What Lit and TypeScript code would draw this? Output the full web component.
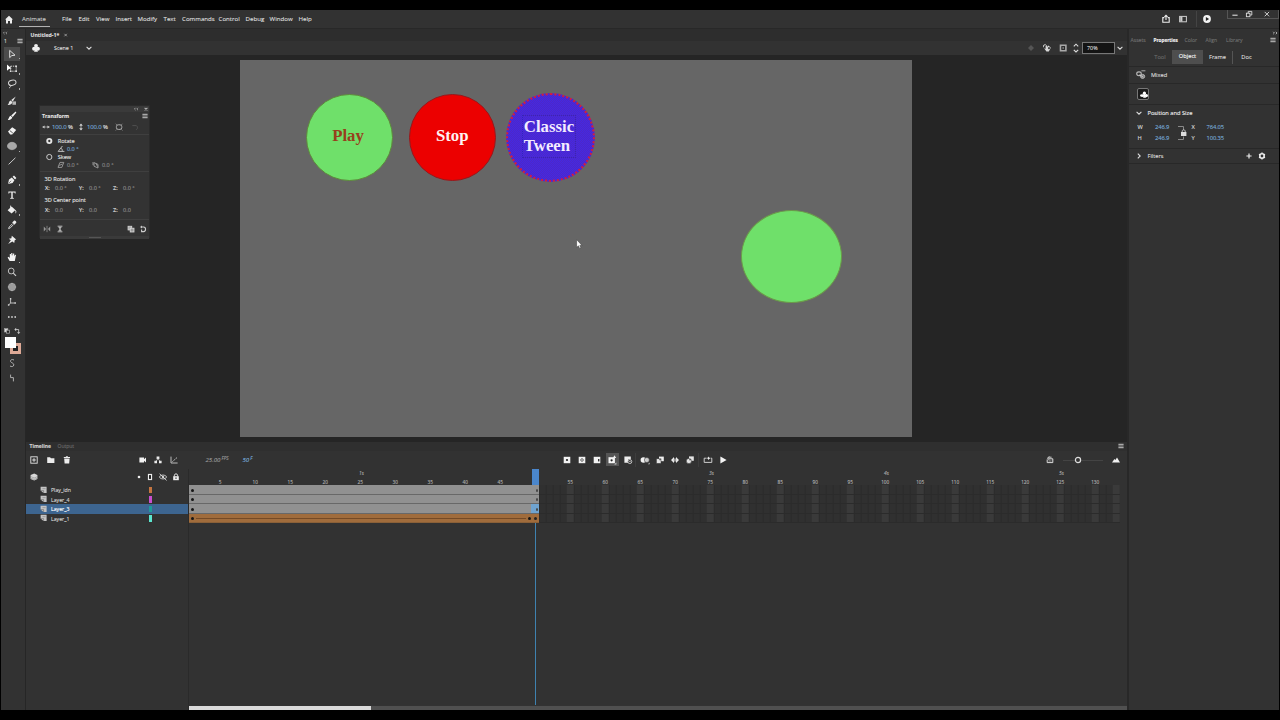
import { LitElement, html, css, svg } from "lit";
import { customElement } from "lit/decorators.js";

const W = "#e4e4e4";

/* Each glyph is drawn on a 12 x 12 grid centred on (6,6). */
const glyphs: Record<string, any> = {
  home: svg`<path d="M6 1.8 L10 5.6 H9 V9.6 H7 V7 H5 V9.6 H3 V5.6 H2 Z" fill="#eee"/>`,
  share: svg`<path d="M4.3 4.6 H2.8 V9.2 H9.2 V4.6 H7.7 M6 7 V2.4 M4.4 3.8 L6 2.2 L7.6 3.8" fill="none" stroke="#eee" stroke-width="1.1"/>`,
  workspace: svg`<rect x="2.6" y="3.4" width="6.8" height="5.4" fill="none" stroke="#ccc"/><rect x="3.2" y="3.6" width="2.2" height="5" fill="#ccc"/>`,
  playCircle: svg`<circle cx="6" cy="6" r="3.9" fill="#f2f2f2"/><path d="M4.9 4 L8.1 6 L4.9 8Z" fill="#222"/>`,
  min: svg`<path d="M3.4 7.2 H8.6" stroke="#eee" stroke-width="1"/>`,
  restore: svg`<path d="M5.2 5.2 V3.4 H8.8 V7 H7" fill="none" stroke="#ddd" stroke-width=".9"/><rect x="3.4" y="5.2" width="3.5" height="3.5" fill="none" stroke="#ddd" stroke-width=".9"/>`,
  close: svg`<path d="M3.7 3.9 L8.1 8.3 M8.1 3.9 L3.7 8.3" stroke="#ddd" stroke-width=".9"/>`,
  tinyX: svg`<path d="M4.4 4.8 L6.9 7.3 M6.9 4.8 L4.4 7.3" stroke="#aaa" stroke-width=".8"/>`,
  panelX: svg`<path d="M4.6 4.8 L7.4 7.4 M7.4 4.8 L4.6 7.4" stroke="#bbb" stroke-width="1.1"/>`,
  left2: svg`<path d="M5.6 4.8 L4.4 6 L5.6 7.2 M8 4.8 L6.8 6 L8 7.2" stroke="#aaa" stroke-width=".8" fill="none"/>`,
  right2: svg`<path d="M4.2 4.8 L5.4 6 L4.2 7.2 M6.8 4.8 L8 6 L6.8 7.2" stroke="#ccc" stroke-width=".8" fill="none"/>`,
  burger: svg`<path d="M3.4 4.4 H8.6 M3.4 6 H8.6 M3.4 7.6 H8.6" stroke="#a8a8a8" stroke-width="1.1"/>`,
  club: svg`<circle cx="6" cy="3.8" r="1.9" fill="#f0f0f0"/><circle cx="4.1" cy="6.8" r="2" fill="#f0f0f0"/><circle cx="7.9" cy="6.8" r="2" fill="#f0f0f0"/><path d="M5.2 5 H6.8 V7.6 L8 9.8 H4 L5.2 7.6Z" fill="#f0f0f0"/>`,
  chevD: svg`<path d="M3.6 4.8 L6 7.2 L8.4 4.8" stroke="#ddd" stroke-width="1.1" fill="none"/>`,
  chevR: svg`<path d="M4.8 3.6 L7.2 6 L4.8 8.4" stroke="#ddd" stroke-width="1.1" fill="none"/>`,
  center: svg`<path d="M6 3 L9 6 L6 9 L3 6Z" fill="#555"/>`,
  rotateHand: svg`<path d="M3 6 L4.6 7 V3.4 L5.6 3 L6.2 5 L7 3.6 L8 4 L9.8 5.8 L7.8 9.4 H5.4Z" fill="#d8d8d8"/><path d="M2.2 3.6 L4.6 2.4 M2 5 L3 4.4" stroke="#ddd"/><circle cx="8" cy="6.2" r="1.1" fill="#444"/>`,
  clip: svg`<rect x="3.5" y="3.3" width="5.4" height="5.4" fill="#222" stroke="#a9a9a9" stroke-width="1.6"/><rect x="5.3" y="5.1" width="1.8" height="1.8" fill="#777"/>`,
  updown: svg`<path d="M3.8 4.4 L6 2.2 L8.2 4.4 M3.8 7.8 L6 10 L8.2 7.8" fill="none" stroke="#ddd" stroke-width="1.1"/>`,

  select: svg`<path d="M3.7 2.4 V9.6 L5.8 7.6 L9 7.2Z" fill="none" stroke="${W}" stroke-width=".95"/>`,
  freeT: svg`<path d="M1 1.6 L5.6 5.6 L3 6 L1 7.8Z" fill="#fff"/><rect x="4.6" y="3.2" width="5.6" height="5" fill="none" stroke="#ddd" stroke-width=".9" stroke-dasharray="1.4 .8"/><path d="M3.8 7.4h1.6v1.6h-1.6zM9.4 7.4H11v1.6H9.4zM9.4 2.4H11V4H9.4z" fill="#ddd"/>`,
  lasso: svg`<ellipse cx="6.3" cy="4.8" rx="3.8" ry="2.5" fill="none" stroke="#d4d4d4" transform="rotate(-12 6 5)"/><path d="M3.2 6.2 C2.4 7.6 5 7 4.6 8.6 C4.4 9.4 3.4 9.6 3 10" fill="none" stroke="#d4d4d4" stroke-width=".9"/>`,
  fluid: svg`<path d="M9.8 1.4 L5.2 5 L6.8 6.6Z M4.6 5.4 L6.4 7 C5.6 9.8 3.4 10 1.6 10 C3.2 8.6 2.6 6.2 4.6 5.4Z" fill="#e4e4e4"/><rect x="6.4" y="6.4" width="3.6" height="3.4" fill="#b4b4b4"/>`,
  brush: svg`<path d="M9.6 1.6 L5.2 5.4 L6.7 6.9 L10.4 2.4Z M4.6 5.8 L6.3 7.5 C5.6 9.8 3.6 10 1.8 10 C3 8.6 2.8 6.6 4.6 5.8Z" fill="#f4f4f4"/>`,
  eraser: svg`<path d="M2 6.6 L6.2 2.2 L10.2 5 L6.2 9.6 H4.2Z" fill="#f2f2f2"/><path d="M3.8 5.6 L6.8 8" stroke="#333" stroke-width=".8"/>`,
  oval: svg`<ellipse cx="6" cy="6" rx="4.6" ry="3.7" fill="#a9a9a9" stroke="#c4c4c4" stroke-width=".5"/>`,
  line: svg`<path d="M2.6 9.4 L9.4 2.8" stroke="#d8d8d8" stroke-width=".9"/>`,
  pen: svg`<path d="M2 10 L3 5.4 L5.8 3.6 L8.4 6.2 L6.6 9Z M6.6 2.8 L8 1.6 L10.4 4 L9 5.4Z" fill="#eee"/><path d="M2.4 9.6 L5.2 6.8" stroke="#333" stroke-width=".6"/>`,
  type: svg`<path d="M2.4 2.4 H9.6 V4.6 H8.9 L8.5 3.4 H6.7 V8.8 L7.8 9.1 V9.7 H4.2 V9.1 L5.3 8.8 V3.4 H3.5 L3.1 4.6 H2.4Z" fill="#eee"/>`,
  bucket: svg`<path d="M1.6 6.2 L5.6 2.6 L9.4 6 L5.6 9.6Z" fill="#eee"/><path d="M4.6 1.6 V5 M9 6 C10.4 7 10 9 9.4 9" stroke="#eee" stroke-width=".9" fill="none"/>`,
  dropper: svg`<path d="M6.2 3.6 L8.2 1.6 C9 1.2 10.8 3 10.2 3.8 L8.4 5.8Z" fill="#eee"/><path d="M6.6 4.6 L3.2 8 L2.6 9.6 L4.2 8.9 L7.6 5.6" fill="none" stroke="#ddd" stroke-width=".9"/>`,
  pin: svg`<path d="M5.8 1.8 L10.2 5.4 L8.8 6 L8.2 9 L6.4 7.4 L2.2 10 L4.8 6.2 L2.8 4.8 L5.4 4.2Z" fill="#eee"/>`,
  hand: svg`<path d="M3.6 10 L1.6 6.4 L2.6 5.8 L3.8 6.9 V3 H4.9 L5.2 5 V2 H6.4 L6.5 5 L7.2 2.4 H8.2 V5.3 L9 3.7 L10 4.1 L8.8 10Z" fill="#f2f2f2"/>`,
  zoom: svg`<circle cx="5.2" cy="5" r="2.9" fill="none" stroke="#ccc" stroke-width=".9"/><path d="M7.3 7.1 L10 9.8" stroke="#ccc" stroke-width="1.2"/>`,
  ball: svg`<circle cx="6" cy="6" r="3.9" fill="#9c9c9c"/><path d="M6 1.8V3M6 9V10.2M1.8 6H3M9 6H10.2" stroke="#c4c4c4" stroke-width=".8"/>`,
  bones: svg`<path d="M4.6 3 V7 H9 M4.6 7 L2.6 9" fill="none" stroke="#ccc" stroke-width=".9"/><path d="M3.9 2h1.4v1.6H3.9zM8.5 6.2H10v1.6H8.5zM1.9 8.2h1.5v1.5H1.9z" fill="#ccc"/>`,
  dots: svg`<circle cx="2.8" cy="6" r=".9" fill="#ccc"/><circle cx="6" cy="6" r=".9" fill="#ccc"/><circle cx="9.2" cy="6" r=".9" fill="#ccc"/>`,
  bwSwatch: svg`<rect x="3" y="3.2" width="4" height="4" fill="#ddd" stroke="#aaa" stroke-width=".7"/><rect x="5.2" y="5" width="3.6" height="3.6" fill="#222" stroke="#bbb" stroke-width=".8"/>`,
  swap: svg`<path d="M4.2 4.2 H8 V8.2" fill="none" stroke="#ccc"/><path d="M5 2.2 V6.2 L2.8 4.2Z M6 7.4 H10 L8 9.6Z" fill="#ccc"/>`,
  sCurve: svg`<path d="M8 3 C6 1.8 4 3 4.6 4.6 C5.2 6 7.8 6 7.8 7.8 C7.8 9.8 5.4 10 4 9" fill="none" stroke="#bbb" stroke-width=".9"/>`,
  elbow: svg`<path d="M4.6 2.6 V5.6 H7.4 V9.4" fill="none" stroke="#bbb" stroke-width=".9"/>`,

  hArrow: svg`<path d="M2.6 6 H9.4" stroke="#999" stroke-width=".8"/><path d="M4.6 4.4V7.6L2.2 6ZM7.4 4.4V7.6L9.8 6Z" fill="#ccc"/>`,
  vArrow: svg`<path d="M6 3 V9" stroke="#aaa"/><path d="M4.2 4.8H7.8L6 2.4ZM4.2 7.2H7.8L6 9.6Z" fill="#ccc"/>`,
  link: svg`<rect x="3.4" y="3.8" width="5.4" height="4.6" rx="1.8" fill="none" stroke="#aaa"/><path d="M2.8 2.8l.9.9M9.4 2.8l-.9.9M2.8 9.4l.9-.9M9.4 9.4l-.9-.9" stroke="#aaa" stroke-width=".8"/>`,
  undoDim: svg`<path d="M3.4 4.6 H7 C9 5 9 8.2 7 8.6" fill="none" stroke="#505050"/>`,
  radioOn: svg`<circle cx="6.3" cy="6" r="2.1" fill="#333" stroke="#e4e4e4" stroke-width="1.9"/>`,
  radioOff: svg`<circle cx="6.3" cy="6" r="2.6" fill="none" stroke="#c8c8c8" stroke-width="1"/>`,
  angle: svg`<path d="M7.4 3 L3.2 8.4 H9.4 M6 5.2 C7.2 6 7.4 7 7.2 8.2" fill="none" stroke="#ccc" stroke-width=".9"/>`,
  skewA: svg`<path d="M5 3.4 H8.8 L6.8 8.4 H3Z M4.4 6.4 L7.4 5" fill="none" stroke="#aaa" stroke-width=".8"/>`,
  skewB: svg`<path d="M4 3.6 L8 5.4 V9 L4 7.2Z M3 3V6.2M6 4.4 L7.6 7.6" fill="none" stroke="#aaa" stroke-width=".8"/>`,
  flipH: svg`<path d="M6 2.8V9.2" stroke="#999" stroke-width=".7"/><path d="M2.8 3.6V8.4L5 6ZM9.2 3.6V8.4L7 6Z" fill="#999"/>`,
  flipV: svg`<path d="M3.6 3.2H8.4M3.6 8.8H8.4" stroke="#bbb"/><path d="M4.6 4.2H7.4L6 6L7.4 7.8H4.6L6 6Z" fill="#ccc" stroke="#ccc" stroke-width=".4"/>`,
  dup: svg`<rect x="3" y="3.2" width="3.8" height="3.8" fill="#aaa" stroke="#ddd" stroke-width=".7"/><rect x="5.2" y="5.2" width="3.8" height="3.8" fill="#999" stroke="#ddd" stroke-width=".8"/>`,
  undo: svg`<path d="M4 4 H6.6 C9.2 4 9.2 8.4 6.6 8.6 H4.6 V6.4" fill="none" stroke="#ccc" stroke-width="1.1"/><path d="M5 2.4V5.6L3 4Z" fill="#ccc"/>`,

  addLayer: svg`<rect x="2.8" y="2.8" width="6.4" height="6.4" fill="none" stroke="#e4e4e4" stroke-width=".9"/><path d="M6 4.2V7.8M4.2 6H7.8" stroke="#eee" stroke-width=".9"/>`,
  folder: svg`<path d="M2.2 3.2H5L6 4.2H9.4V9H2.2Z" fill="#ececec"/>`,
  trash: svg`<path d="M3.2 4.4H8.6L8.2 9.4H3.6ZM2.8 3.1H9V4H2.8ZM4.9 2.3H6.9V3.3H4.9Z" fill="#ececec"/>`,
  camera: svg`<path d="M2.4 3.6H7V5.2L9 3.6V8.4L7 6.8V8.4H2.4Z" fill="#f2f2f2"/>`,
  parent: svg`<path d="M4.6 2.6H7.4V5H4.6ZM2.4 6.8H5V9.2H2.4ZM7 6.8H9.6V9.2H7Z" fill="#eee"/><path d="M6 4.6L3.8 7.6M6 4.6L8.2 7.6" stroke="#ccc" stroke-width=".8"/>`,
  graph: svg`<path d="M3 2.6V9H9.6" fill="none" stroke="#ccc" stroke-width=".9"/><path d="M4.4 7.6L9 3.6" fill="none" stroke="#ccc" stroke-width=".9" stroke-dasharray="1.6 .7"/>`,
  stack: svg`<path d="M2.6 4 L6.2 2.4 L9.4 4 V8 L6.2 9.6 L2.6 8Z" fill="#d8d8d8"/><path d="M2.8 5.6L6.2 7L9.4 5.6M2.8 7.2L6.2 8.5L9.4 7.2" fill="none" stroke="#777" stroke-width=".5"/>`,
  dot: svg`<circle cx="6" cy="6" r="1.3" fill="#eee"/>`,
  outline: svg`<rect x="4.5" y="3.5" width="3" height="5" fill="#111" stroke="#eee" stroke-width="1.2"/>`,
  eyeOff: svg`<path d="M2.2 6C4 3.4 8 3.4 9.8 6C8 8.6 4 8.6 2.2 6Z" fill="none" stroke="#ccc" stroke-width=".9"/><circle cx="6" cy="6" r="1.2" fill="#ccc"/><path d="M2.6 2.8L9.6 9.4" stroke="#ddd" stroke-width=".9"/>`,
  lock: svg`<rect x="3.2" y="5.2" width="5.6" height="4" fill="#eee"/><path d="M4.4 5.4V4.2C4.4 2.4 7.6 2.4 7.6 4.2V5.4" fill="none" stroke="#eee" stroke-width=".9"/><rect x="5.5" y="6.4" width="1" height="1.6" fill="#333"/>`,
  page: svg`<path d="M2.6 2.8H8.6V9H5.6L2.6 6.6Z" fill="#c4c4c4"/><path d="M2.6 6.6H5.6V9" fill="none" stroke="#666" stroke-width=".6"/><path d="M4.4 4.6H7.6" stroke="#777" stroke-width=".5"/>`,
  kf: svg`<rect x="2.7" y="2.8" width="6.6" height="6.4" fill="#f2f2f2"/><circle cx="6" cy="6" r="1.1" fill="#222"/>`,
  kfBlank: svg`<rect x="2.7" y="2.8" width="6.6" height="6.4" fill="#f2f2f2"/><circle cx="6" cy="6" r="1.3" fill="#eee" stroke="#333" stroke-width=".7"/>`,
  frame: svg`<rect x="2.7" y="2.8" width="6.6" height="6.4" fill="#f2f2f2"/><rect x="7" y="5" width="1.4" height="2.4" fill="#333"/>`,
  kfAuto: svg`<rect x="2.5" y="3.2" width="6.4" height="6" fill="#f5f5f5"/><circle cx="5.6" cy="6.3" r="1.1" fill="#222"/><path d="M8.4 1.2L10.2 4H7Z" fill="#eee"/><path d="M10.4 8.4V10.6H8.2Z" fill="#ccc"/>`,
  kfRemove: svg`<path d="M2.4 2.6H8.8V5.4H6V8.8H2.4Z" fill="#eee"/><circle cx="7.8" cy="7.6" r="2" fill="#333" stroke="#ddd" stroke-width=".8"/><path d="M6.8 7.6H8.8" stroke="#ddd" stroke-width=".7"/>`,
  onion: svg`<circle cx="4.4" cy="6" r="2.8" fill="#f2f2f2"/><circle cx="7.8" cy="6" r="2.5" fill="#ccc" stroke="#333" stroke-width=".5"/><path d="M10.6 8.6V10.2H9Z" fill="#ccc"/>`,
  multi: svg`<rect x="5" y="2.6" width="4.8" height="4.6" fill="#eee"/><rect x="2.4" y="4.8" width="4.6" height="4.6" fill="#e4e4e4" stroke="#333" stroke-width=".5"/><rect x="5.4" y="5" width="1.3" height="1.2" fill="#333"/>`,
  tweenI: svg`<path d="M5 3V9L2 6ZM7 3V9L10 6Z" fill="#eee"/><path d="M4 6H8" stroke="#eee" stroke-width="2.6"/><path d="M4.8 6H7.2" stroke="#333" stroke-width=".9"/>`,
  tweenC: svg`<rect x="5" y="2.4" width="4.8" height="4.4" fill="#e4e4e4"/><circle cx="4.9" cy="7" r="2.6" fill="#e4e4e4" stroke="#333" stroke-width=".5"/><rect x="5.4" y="5" width="1.3" height="1.3" fill="#333"/>`,
  loop: svg`<path d="M4 4.2H2.2V8.4H9.8V4.2H8.6" fill="none" stroke="#ddd" stroke-width=".9"/><path d="M4.4 4.2H6" stroke="#ddd" stroke-width=".9"/><path d="M6 2.4V6L8.2 4.2Z" fill="#eee"/>`,
  play: svg`<path d="M3.4 2.6L9.6 6L3.4 9.4Z" fill="#f4f4f4"/>`,
  resetView: svg`<path d="M3.2 5.4V8.6H8.8V4.8H4.4" fill="none" stroke="#ddd" stroke-width="1"/><path d="M4.6 3.2H7.6M5.4 2.6L3.4 4.2L5.4 5.8" stroke="#ddd" stroke-width=".9" fill="none"/><path d="M4.4 7H7.6" stroke="#aaa" stroke-width=".8"/>`,
  knob: svg`<circle cx="6" cy="6" r="2.6" fill="#333" stroke="#ddd" stroke-width="1.2"/>`,
  hills: svg`<path d="M2 8.6L4.4 5L5.4 6L7 3.6L10 8.6Z" fill="#f0f0f0"/>`,
  mixed: svg`<ellipse cx="4" cy="4.8" rx="2.3" ry="1.9" fill="none" stroke="#bbb" stroke-width="1.1"/><ellipse cx="7.6" cy="7.4" rx="2.1" ry="2" fill="#888" stroke="#bbb" stroke-width=".9"/><path d="M4 5.8L8 7.8M6.4 1.8H10.4" stroke="#ccc" stroke-width=".8"/>`,
  clubSmall: svg`<circle cx="6.4" cy="4.2" r="1.6" fill="#fff"/><ellipse cx="4.2" cy="6.6" rx="2.2" ry="1.4" fill="#fff"/><circle cx="8.4" cy="6.6" r="1.6" fill="#fff"/><path d="M5.6 5H7.2L8 8.8H5.2Z" fill="#fff"/>`,
  plus: svg`<path d="M6 3.4V8.6M3.4 6H8.6" stroke="#eee" stroke-width="1.2"/>`,
  gear: svg`<circle cx="6" cy="6" r="2.2" fill="none" stroke="#eee" stroke-width="1.6"/><path d="M6 2.4V3.6M6 8.4V9.6M3 4.2L4 4.8M9 4.2L8 4.8M3 7.8L4 7.2M9 7.8L8 7.2" stroke="#eee" stroke-width="1.3"/>`,
};

const icon = (name: string) =>
  html`<svg class="ic" viewBox="0 0 12 12" width="12" height="12">${glyphs[name]}</svg>`;

const base = css`
  :host, * { box-sizing: border-box; }
  .ic { display: block; flex: none; justify-self: center; }
  .row { display: grid; grid-auto-rows: 100%; align-items: center; justify-items: start; white-space: nowrap; }
  .dim { color: #6a6a6a; }
  .blue { color: #78a9d8; }
  .b { font-weight: 700; }
`;

@customElement("menu-bar")
class MenuBar extends LitElement {
  static styles = [base, css`
    :host { display: flex; height: 19px; background: #323232; border-bottom: 1px solid #282828; font-size: 6.1px; }
    .home { width: 17.5px; padding: 3.5px 0 0 0; margin-left: -.5px; }
    .mode { width: 31px; height: 17.4px; line-height: 18px; text-align: center; border-bottom: 1.2px solid #b0b0b0; color: #ccc; margin-left: .5px; }
    .menus { margin-left: 12.6px; height: 17.8px; grid-template-columns: 16.5px 17.5px 19.5px 22px 26px 18.5px 36.5px 27px 24px 29px 14px; }
    .right { margin-left: auto; height: 18px; grid-template-columns: 17px 18px 9px 11px 15px; }
    .sep { width: 1px; height: 16px; background: #444; justify-self: center; }
    .win { display: grid; grid-template-columns: 14px 14px 21.5px; grid-auto-rows: 100%; width: 51.5px; height: 8.5px; border: 1px solid #555; border-top: 0; justify-items: center; align-items: center; }
    .win .ic { margin-top: 1px; }
  `];
  render() {
    const items = ["File", "Edit", "View", "Insert", "Modify", "Text", "Commands", "Control", "Debug", "Window", "Help"];
    return html`
      <div class="home">${icon("home")}</div>
      <div class="mode">Animate</div>
      <div class="row menus">${items.map((t) => html`<span>${t}</span>`)}</div>
      <div class="row right">${icon("share")}${icon("workspace")}<i class="sep"></i>${icon("playCircle")}</div>
      <div class="win">${icon("min")}${icon("restore")}${icon("close")}</div>`;
  }
}

@customElement("tool-strip")
class ToolStrip extends LitElement {
  static styles = [base, css`
    :host { display: flex; flex-direction: column; width: 25px; background: #323232; border-right: 1px solid #262626; font-size: 5px; align-items: center; padding-right: .4px; }
    .top { height: 7px; width: 100%; display: flex; align-items: center; margin: 0 0 1px -4px; }
    .head { width: 100%; height: 9.5px; display: flex; align-items: center; justify-content: space-between; padding: 0 0 2px 3px; }
    .head .ic { margin-right: -1px; }
    .tool { width: 16px; height: 15px; margin-right: 1px; display: flex; align-items: center; justify-content: center; }
    .tool.on { background: #4c4c4c; height: 13.4px; margin: .8px 1px .8px 0; }
    .more { width: 1.6px; height: 1.6px; background: #aaa; align-self: flex-end; margin: 0 -2px 1.5px .4px; }
    .gap { margin-top: 2.5px; }
    .gap2 { margin-top: 3.5px; }
    .pair { display: flex; height: 12px; margin-left: -1px; }
    .pair .ic { width: 10px; }
    .sw { display: grid; width: 16px; height: 17px; margin: .5px 0 1.5px 0; }
    .fill { grid-area: 1/1; width: 11px; height: 11px; background: #fff; z-index: 1; }
    .stroke { grid-area: 1/1; width: 11px; height: 11px; border: 3px solid #dda996; background: #222; align-self: end; justify-self: end; }
  `];
  tool(n: string, more = false, on = false) {
    return html`<div class="tool ${on ? "on" : ""}">${icon(n)}${more ? html`<i class="more"></i>` : ""}</div>`;
  }
  render() {
    return html`
      <div class="top">${icon("left2")}</div>
      <div class="head"><span>1</span>${icon("burger")}</div>
      <div>${this.tool("select", true, true)}${this.tool("freeT", true)}${this.tool("lasso", true)}</div>
      <div class="gap">${["fluid", "brush", "eraser"].map((n) => this.tool(n))}${this.tool("oval", true)}${this.tool("line")}</div>
      <div class="gap2">${this.tool("pen", true)}${this.tool("type")}${this.tool("bucket", true)}${this.tool("dropper")}${this.tool("pin")}</div>
      <div class="gap">${this.tool("hand", true)}${["zoom", "ball", "bones", "dots"].map((n) => this.tool(n))}</div>
      <div class="pair">${icon("bwSwatch")}${icon("swap")}</div>
      <div class="sw"><div class="fill"></div><div class="stroke"></div></div>
      ${this.tool("sCurve")}${this.tool("elbow")}`;
  }
}

@customElement("transform-panel")
class TransformPanel extends LitElement {
  static styles = [base, css`
    :host { display: block; width: 111px; height: 133px; background: #333; border: 1px solid #2b2b2b; font-size: 5.6px; color: #e2e2e2; }
    .strip { height: 5.5px; background: #3a3a3a; display: flex; justify-content: flex-end; align-items: center; }
    .strip .ic { margin: 1px -2.5px 0 0; }
    .title { height: 8px; display: flex; align-items: center; justify-content: space-between; padding-left: 2px; font-size: 5.2px; }
    .title .ic { margin-right: -1.5px; }
    .scale { height: 14px; grid-template-columns: 12px 22px 13px 25px 14px 18px; font-size: 6px; }
    .scale .blue { letter-spacing: -.15px; }
    .line { height: 1px; background: #3f3f3f; }
    .opt { height: 8.5px; grid-template-columns: 17px 60px; padding-left: .7px; }
    .val { height: 7.5px; grid-template-columns: 15px 12px 23px 12px 20px; font-size: 5.5px; }
    .h { height: 10px; line-height: 10px; padding-left: 4.5px; }
    .xyz { height: 9.5px; grid-template-columns: 10px 24px 10px 24px 10px 20px; padding-left: 5px; }
    .pad { height: 2px; }
    .pad.tall { height: 4px; }
    .foot { height: 14px; grid-template-columns: 12.5px 12.5px 59px 12px 12px; padding-left: 1px; }
    .grip { height: 3px; background: #3a3a3a; display: flex; justify-content: center; align-items: center; }
    .grip i { width: 12px; height: 1px; background: #555; }
    .num { color: #8f8f8f; }
  `];
  render() {
    const xyz = (d: string) => ["X", "Y", "Z"].map((a) => html`<span>${a}:</span><span class="num">0.0${d}</span>`);
    return html`
      <div class="strip">${icon("left2")}${icon("panelX")}</div>
      <div class="title"><span class="b">Transform</span>${icon("burger")}</div>
      <div class="row scale">${icon("hArrow")}<span><span class="blue">100.0</span> %</span>${icon("vArrow")}<span><span class="blue">100.0</span> %</span>${icon("link")}${icon("undoDim")}</div>
      <div class="line"></div><div class="pad"></div>
      <div class="row opt">${icon("radioOn")}<span>Rotate</span></div>
      <div class="row val"><span></span>${icon("angle")}<span class="blue">0.0 °</span></div>
      <div class="row opt">${icon("radioOff")}<span>Skew</span></div>
      <div class="row val"><span></span>${icon("skewA")}<span class="num">0.0 °</span>${icon("skewB")}<span class="num">0.0 °</span></div>
      <div class="pad"></div><div class="line"></div><div class="pad"></div>
      <div class="h">3D Rotation</div>
      <div class="row xyz">${xyz(" °")}</div>
      <div class="pad"></div>
      <div class="h">3D Center point</div>
      <div class="row xyz">${xyz("")}</div>
      <div class="pad tall"></div><div class="line"></div><div class="pad"></div>
      <div class="row foot">${icon("flipH")}${icon("flipV")}<span></span>${icon("dup")}${icon("undo")}</div>
      <div class="grip"><i></i></div>`;
  }
}

@customElement("stage-area")
class StageArea extends LitElement {
  static styles = [base, css`
    :host { display: block; position: relative; height: 387px; background: #252525; overflow: hidden; padding: 5px 0 0 214px; }
    .stage { position: relative; width: 672px; height: 377px; background: #666; }
    .c { position: absolute; border-radius: 50%; display: flex; align-items: center; justify-content: center; font: 700 16.8px/19.5px "Liberation Serif", serif; -webkit-text-stroke: 0; }
    .play { left: 65.5px; top: 33.5px; width: 87px; height: 87px; background: #6fe06a; border: 1px solid #5f8a3c; color: #983f1c; padding-right: 2px; padding-bottom: 2px; }
    .stop { left: 168.5px; top: 33.5px; width: 87.5px; height: 87.5px; background: #ec0000; border: 1px solid #96191c; color: #fff2f2; padding-bottom: 4px; }
    .tween { left: 265.5px; top: 32.5px; width: 89px; height: 89px; border: 2px dotted #d41c40; color: #f4ecff; padding: 0 2px 1.5px 0; background: repeating-conic-gradient(#4429e2 0 25%, #4e28c8 0 50%) 0 0 / 2px 2px; }
    .tween span { outline: 1px dotted #3824b4; outline-offset: 1px; }
    .big { left: 500.5px; top: 149.5px; width: 101px; height: 93px; background: #6fe06a; border: 1px solid #6b9a4a; }
    .cursor { position: absolute; left: 335.5px; top: 179px; }
    transform-panel { position: absolute; left: 13px; top: 50px; z-index: 2; }
  `];
  render() {
    return html`
      <div class="stage">
        <div class="c play">Play</div>
        <div class="c stop">Stop</div>
        <div class="c tween"><span>Classic<br>Tween</span></div>
        <div class="c big"></div>
        <svg class="cursor" width="7" height="11" viewBox="0 0 7 11"><path d="M.6 .6V8.4L2.4 6.8L3.6 9.4L4.9 8.8L3.8 6.4H6Z" fill="#fff" stroke="#333" stroke-width=".5"/></svg>
      </div>
      <transform-panel></transform-panel>`;
  }
}

@customElement("doc-header")
class DocHeader extends LitElement {
  static styles = [base, css`
    :host { display: block; }
    .tabs { height: 11.5px; background: #2d2d2d; grid-template-columns: 29px 12px; padding-left: 4.5px; font-size: 5.2px; }
    .bar { height: 14.5px; background: #323232; display: flex; align-items: center; font-size: 5.4px; padding-left: 4px; }
    .scene { width: 29px; margin-left: 12px; }
    .right { margin-left: auto; margin-right: -.5px; height: 14.5px; grid-template-columns: 16px 16px 15px 12px 33px 12px; }
    .zoom { width: 33px; height: 12px; line-height: 10px; background: #141414; border: 1px solid #777; padding-left: 4px; }
    .right .ic:last-child { margin-left: -3px; }
  `];
  render() {
    return html`
      <div class="row tabs"><span class="b">Untitled-1*</span>${icon("tinyX")}</div>
      <div class="bar">${icon("club")}<span class="scene">Scene 1</span>${icon("chevD")}
        <div class="row right">${icon("center")}${icon("rotateHand")}${icon("clip")}${icon("updown")}<div class="zoom">70%</div>${icon("chevD")}</div>
      </div>`;
  }
}

interface Layer { name: string; color: string; on?: boolean; tween?: boolean }

@customElement("time-line")
class TimeLine extends LitElement {
  static styles = [base, css`
    :host { display: flex; flex-direction: column; flex: 1; background: #323232; font-size: 5.4px; color: #d4d4d4; min-height: 0; }
    .tabs { height: 8.5px; grid-template-columns: 28px 1fr 12px; padding: 0 0 0 3.5px; background: #2f2f2f; font-size: 5px; }
    .barwrap { display: flex; height: 18.5px; padding-bottom: .5px; }
    .left { width: 262px; grid-template-columns: 16.5px 16px 16px 60px 16px 15.5px 16px 23.5px 37px 20px; padding-left: 0; }
    .fps, .cur { font-size: 6.1px; font-style: italic; }
    .fps { color: #999; }
    sup { font-size: 4.6px; vertical-align: 2px; line-height: 0; margin-left: 1px; }
    .mid { margin-left: 271.4px; grid-template-columns: repeat(5, 15.15px) 2.4px repeat(4, 15.1px) 2.4px 15.4px 14px; }
    .hot { width: 13px; height: 13px; background: #555; display: grid; place-items: center; justify-self: center; }
    .sep { width: 1px; height: 14px; background: #3d3d3d; }
    .zoom { margin-left: auto; grid-template-columns: 12px 44px 32px; margin-right: -5px; }
    .slide { width: 40px; display: grid; align-items: center; background: linear-gradient(#444, #444) 0 6px / 100% 1px no-repeat; justify-items: center; margin-left: 7px; }
    .slide .ic { margin-left: -9px; }
    .body { display: grid; grid-template-columns: 163px 1fr; flex: 1; min-height: 0; }
    .names { border-right: 1px solid #2a2a2a; }
    .lh { height: 16px; grid-template-columns: 15px 91px 12.5px 10px 15px 11px; padding-left: .5px; }
    .layer { height: 9.5px; grid-template-columns: 10px 14px 92px 15px; padding-left: 1px; font-size: 5.2px; }
    .layer span { grid-column: 3; margin-top: .6px; }
    .layer .chip { width: 3.5px; height: 6.5px; justify-self: center; grid-column: 4; }
    .layer.on { background: #3d6590; color: #fff; }
    .tracks { display: flex; flex-direction: column; position: relative; width: 938px; }
    .secs { height: 7.5px; display: flex; font-size: 5px; color: #a8a8a8; font-style: italic; }
    .secs span { width: 175px; text-align: right; line-height: 9px; }
    .ruler { height: 8.5px; display: flex; font-size: 4.7px; color: #b0b0b0; line-height: 10.5px; }
    .ruler span { width: 35px; text-align: center; position: relative; left: 13.7px; }
    .track { height: 9.5px; width: 931px; display: flex;
      background: repeating-linear-gradient(90deg, #3a3a3a 0 7px, transparent 7px 35px) -7.3px 0, repeating-linear-gradient(90deg, #2a2a2a 0 1px, #303030 1px 7px) -.3px 0; border-bottom: 1px solid #2b2b2b; }
    .span { width: 349.5px; height: 9.5px; background: #919191; border-bottom: 1px solid #686868; display: flex; justify-content: space-between; align-items: center; padding: 0 .6px 0 2px; }
    .span i { width: 3px; height: 3px; background: #161616; border-radius: 50%; margin-top: 1.6px; }
    .span i:last-child { width: 2px; background: #444; }
    .span.tween { background: #a06c3c; border-bottom-color: #8a6038; }
    .span.tween u { flex: 1; height: 1px; background: #744a26; margin: 1.6px 2px 0 2px; }
    .span.tween u + i { margin-right: 3px; }
    .span.tween i:last-child { margin-right: 1px; width: 3px; background: #222; }
    .span.sel { background: linear-gradient(90deg, transparent 342.5px, #6fa3cf 342.5px) #919191; }
    .head { position: absolute; left: 342.8px; top: 0; width: 7px; height: 16px; background: #4a86cc; }
    .wire { position: absolute; left: 346px; top: 54px; bottom: 5px; width: 1px; background: #3f82b0; }
    .scroll { margin-top: auto; height: 5px; background: #505050; border-top: 1px solid #333; }
    .thumb { width: 182px; height: 4px; background: #dadada; }
  `];
  layers: Layer[] = [
    { name: "Play_idn", color: "#c57540" },
    { name: "Layer_4", color: "#c94fd0" },
    { name: "Layer_3", color: "#1f9a98", on: true },
    { name: "Layer_1", color: "#5ce6cf", tween: true },
  ];
  render() {
    const ticks = Array.from({ length: 26 }, (_, i) => (i + 1) * 5);
    return html`
      <div class="row tabs"><span class="b">Timeline</span><span class="dim">Output</span>${icon("burger")}</div>
      <div class="barwrap">
        <div class="row left">${icon("addLayer")}${icon("folder")}${icon("trash")}<span></span>${icon("camera")}${icon("parent")}${icon("graph")}<span></span><span class="fps">25.00<sup>FPS</sup></span><span class="cur blue">50<sup>F</sup></span></div>
        <div class="row mid">${icon("kf")}${icon("kfBlank")}${icon("frame")}<div class="hot">${icon("kfAuto")}</div>${icon("kfRemove")}<i class="sep"></i>${icon("onion")}${icon("multi")}${icon("tweenI")}${icon("tweenC")}<i class="sep"></i>${icon("loop")}${icon("play")}</div>
        <div class="row zoom">${icon("resetView")}<div class="slide">${icon("knob")}</div>${icon("hills")}</div>
      </div>
      <div class="body">
        <div class="names">
          <div class="row lh">${icon("stack")}<span></span>${icon("dot")}${icon("outline")}${icon("eyeOff")}${icon("lock")}</div>
          ${this.layers.map((l) => html`<div class="row layer ${l.on ? "on" : ""}"><i></i>${icon("page")}<span>${l.name}</span><i class="chip" style="background:${l.color}"></i></div>`)}
        </div>
        <div class="tracks">
          <div class="secs">${[1, 2, 3, 4, 5].map((s) => html`<span>${s}s</span>`)}</div>
          <div class="ruler">${ticks.map((t) => html`<span>${t}</span>`)}</div>
          ${this.layers.map((l) => html`<div class="track"><div class="span ${l.tween ? "tween" : ""} ${l.on ? "sel" : ""}"><i></i>${l.tween ? html`<u></u><i></i>` : ""}<i></i></div></div>`)}
          <div class="head"></div><div class="wire"></div>
          <div class="scroll"><div class="thumb"></div></div>
        </div>
      </div>`;
  }
}

@customElement("props-panel")
class PropsPanel extends LitElement {
  static styles = [base, css`
    :host { display: block; width: 152px; background: #323232; border-left: 2px solid #282828; font-size: 5.7px; color: #dcdcdc; }
    .top { height: 6.5px; display: flex; justify-content: flex-end; align-items: center; padding-top: 2px; margin-right: -2px; }
    .tabs { height: 9px; grid-template-columns: 23px 31px 21px 20.5px 40.5px 12px; padding-left: 2px; font-size: 5.1px; color: #707070; }
    .tabs .b { color: #f2f2f2; font-size: 4.7px; }
    .modes { margin-top: 5.5px; height: 14px; grid-template-columns: 20px 31px 29px 1px 27px; padding-left: 23.5px; justify-items: center; }
    .modes .dim { margin-left: -4px; }
    .modes .on { width: 31px; height: 14px; line-height: 13.5px; background: #4e4e4e; text-align: center; color: #f4f4f4; }
    .modes i { width: 1px; height: 13px; background: #555; }
    .sec { border-top: 1.4px solid #282828; }
    .mixed { margin-top: 2px; height: 17px; grid-template-columns: 12px 40px; padding-left: 6.5px; column-gap: 4px; }
    .inst { height: 21px; padding: 4px 0 0 8.5px; }
    .inst div { width: 12px; height: 12px; border: 1px solid #777; border-radius: 2px; background: #1b1b1b; display: grid; place-items: center; }
    .pos { height: 43.5px; padding: 1.5px 0 0 2.5px; }
    .ph { height: 12px; grid-template-columns: 16.5px 60px; color: #eee; font-size: 5.7px; }
    .grid { display: grid; grid-template-columns: 17.5px 19.5px 17px 15px 20px; grid-template-rows: 11px 11px; padding: 3px 0 0 6.5px; align-items: center; }
    .grid svg { grid-row: 1 / 3; grid-column: 3; margin-left: 1px; }
    .grid .blue { font-size: 5.8px; letter-spacing: -.1px; }
    .filters { height: 15.5px; grid-template-columns: 16.5px 95px 13.5px 12px; padding-left: 2.5px; }
    .end { height: 1.4px; background: #282828; }
  `];
  render() {
    return html`
      <div class="top">${icon("right2")}</div>
      <div class="row tabs"><span>Assets</span><span class="b">Properties</span><span>Color</span><span>Align</span><span>Library</span>${icon("burger")}</div>
      <div class="row modes"><span class="dim">Tool</span><span class="on">Object</span><span>Frame</span><i></i><span>Doc</span></div>
      <div class="row sec mixed">${icon("mixed")}<span>Mixed</span></div>
      <div class="sec inst"><div>${icon("clubSmall")}</div></div>
      <div class="sec pos">
        <div class="row ph">${icon("chevD")}<span>Position and Size</span></div>
        <div class="grid">
          <span>W</span><span class="blue">246.9</span>
          <svg width="12" height="18" viewBox="0 0 12 18"><path d="M2 2.5H7.5V6M2 15.5H7.5V12.5" fill="none" stroke="#888"/><rect x="5" y="8" width="5.4" height="4" fill="#ddd"/><path d="M6.2 8V6.8C6.4 5.6 9 5.6 9.2 6.8V8" fill="none" stroke="#ddd" stroke-width=".8"/></svg>
          <span>X</span><span class="blue">764.05</span>
          <span>H</span><span class="blue">246.9</span><span>Y</span><span class="blue">100.35</span>
        </div>
      </div>
      <div class="row sec filters">${icon("chevR")}<span>Filters</span>${icon("plus")}${icon("gear")}</div>
      <div class="end"></div>`;
  }
}

@customElement("app-root")
class AppRoot extends LitElement {
  static styles = [base, css`
    :host { display: block; width: 1280px; height: 720px; background: #000; padding: 10px 1.5px 10px 1px; font-family: "Open Sans", "Noto Sans", sans-serif; color: #dedede; -webkit-text-stroke: .12px; overflow: hidden; cursor: default; }
    .app { display: flex; flex-direction: column; height: 700px; }
    .main { display: flex; flex: 1; min-height: 0; background: #323232; }
    .center { flex: 1; display: flex; flex-direction: column; min-width: 0; }
  `];
  render() {
    return html`<div class="app">
      <menu-bar></menu-bar>
      <div class="main">
        <tool-strip></tool-strip>
        <div class="center"><doc-header></doc-header><stage-area></stage-area><time-line></time-line></div>
        <props-panel></props-panel>
      </div>
    </div>`;
  }
}
